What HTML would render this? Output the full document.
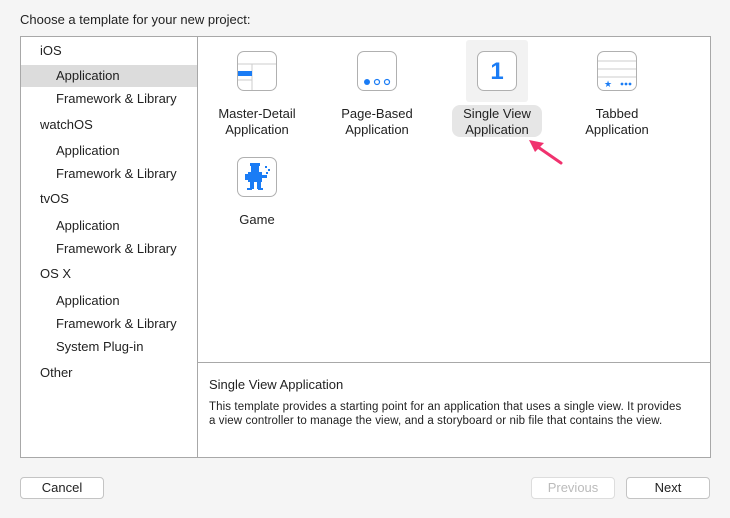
<!DOCTYPE html>
<html><head><style>
body{margin:0;width:730px;height:518px;background:#f5f5f5;font-family:"Liberation Sans",sans-serif;font-size:13px;color:#222;position:relative;overflow:hidden}
.a{position:absolute;white-space:nowrap}
.panel{position:absolute;left:20px;top:36px;width:689px;height:420px;border:1px solid #a8a8a8;background:#fff}
.side{position:absolute;left:0;top:0;width:176px;height:420px;border-right:1px solid #a8a8a8}
.sel{position:absolute;left:0;top:28px;width:176px;height:22px;background:#dcdcdc}
.ic{position:absolute;width:38px;height:38px;border:1px solid #b0b0b0;border-radius:7px;background:#fff;overflow:hidden}
.lbl{position:absolute;text-align:center;width:120px;line-height:16px;font-size:13px}
.btn{position:absolute;top:477px;height:20px;border:1px solid #c4c4c4;border-radius:4px;background:#fff;text-align:center;line-height:20px;font-size:13px}
</style></head><body>
<div class="a" style="left:20px;top:12px">Choose a template for your new project:</div>
<div class="panel">
 <div class="side">
  <div class="sel"></div>
  <div class="a" style="left:19px;top:6px">iOS</div>
  <div class="a" style="left:35px;top:31px">Application</div>
  <div class="a" style="left:35px;top:54px">Framework &amp; Library</div>
  <div class="a" style="left:19px;top:80px">watchOS</div>
  <div class="a" style="left:35px;top:106px">Application</div>
  <div class="a" style="left:35px;top:129px">Framework &amp; Library</div>
  <div class="a" style="left:19px;top:154px">tvOS</div>
  <div class="a" style="left:35px;top:181px">Application</div>
  <div class="a" style="left:35px;top:204px">Framework &amp; Library</div>
  <div class="a" style="left:19px;top:229px">OS X</div>
  <div class="a" style="left:35px;top:256px">Application</div>
  <div class="a" style="left:35px;top:279px">Framework &amp; Library</div>
  <div class="a" style="left:35px;top:302px">System Plug-in</div>
  <div class="a" style="left:19px;top:328px">Other</div>
 </div>
 <div style="position:absolute;left:177px;top:325px;width:512px;height:1px;background:#a8a8a8"></div>
 <div class="a" style="left:188px;top:340px">Single View Application</div>
 <div class="a" style="left:188px;top:363px;font-size:11.5px;line-height:14px;letter-spacing:0.1px">This template provides a starting point for an application that uses a single view. It provides<br>a view controller to manage the view, and a storyboard or nib file that contains the view.</div>
</div>
<div class="a" style="left:466px;top:40px;width:62px;height:62px;background:#f2f2f2;border-radius:3px"></div>
<div class="a" style="left:452px;top:105px;width:90px;height:32px;background:#e6e6e6;border-radius:8px"></div>
<div class="ic" style="left:237px;top:51px"><svg width="38" height="38"><line x1="0" y1="12" x2="38" y2="12" stroke="#ccc"/><line x1="14" y1="12" x2="14" y2="38" stroke="#ccc"/><line x1="0" y1="28" x2="14" y2="28" stroke="#ccc"/><rect x="0" y="19" width="14" height="5" fill="#1a7cf5"/></svg></div>
<div class="ic" style="left:357px;top:51px"><svg width="38" height="38"><circle cx="9" cy="30" r="3" fill="#1a7cf5"/><circle cx="19" cy="30" r="2.5" fill="none" stroke="#1a7cf5" stroke-width="1.2"/><circle cx="29" cy="30" r="2.5" fill="none" stroke="#1a7cf5" stroke-width="1.2"/></svg></div>
<div class="ic" style="left:477px;top:51px"><div class="a" style="left:0;width:38px;top:6px;text-align:center;font-size:24px;font-weight:bold;color:#1a7cf5">1</div></div>
<div class="ic" style="left:597px;top:51px"><svg width="38" height="38"><line x1="0" y1="9" x2="38" y2="9" stroke="#ccc"/><line x1="0" y1="17" x2="38" y2="17" stroke="#ccc"/><line x1="0" y1="25" x2="38" y2="25" stroke="#ccc"/><text x="6" y="35" font-size="9" fill="#1a7cf5">★</text><circle cx="24" cy="32" r="1.4" fill="#1a7cf5"/><circle cx="28" cy="32" r="1.4" fill="#1a7cf5"/><circle cx="32" cy="32" r="1.4" fill="#1a7cf5"/></svg></div>
<div class="ic" style="left:237px;top:157px"><svg width="38" height="38" fill="#1a7cf5"><rect x="12" y="5" width="10" height="3"/><rect x="13" y="8" width="8" height="6"/><rect x="10" y="14" width="14" height="10"/><rect x="7" y="16" width="3" height="6"/><rect x="24" y="17" width="5" height="3"/><rect x="12" y="24" width="4" height="7"/><rect x="19" y="24" width="4" height="7"/><rect x="9" y="30" width="5" height="2"/><rect x="20" y="30" width="5" height="2"/><rect x="27" y="8" width="2" height="2"/><rect x="30" y="11" width="2" height="2"/><rect x="28" y="14" width="2" height="2"/></svg></div>
<div class="lbl" style="left:197px;top:106px">Master-Detail<br>Application</div>
<div class="lbl" style="left:317px;top:106px">Page-Based<br>Application</div>
<div class="lbl" style="left:437px;top:106px">Single View<br>Application</div>
<div class="lbl" style="left:557px;top:106px">Tabbed<br>Application</div>
<div class="lbl" style="left:197px;top:212px">Game</div>
<svg class="a" style="left:525px;top:137px" width="45" height="35"><line x1="36" y1="26" x2="10" y2="8" stroke="#f0326e" stroke-width="3" stroke-linecap="round"/><polygon points="4,3 19,6 10,15" fill="#f0326e"/></svg>
<div class="btn" style="left:20px;width:82px">Cancel</div>
<div class="btn" style="left:531px;width:82px;color:#bbb;border-color:#ddd">Previous</div>
<div class="btn" style="left:626px;width:82px">Next</div>
</body></html>
